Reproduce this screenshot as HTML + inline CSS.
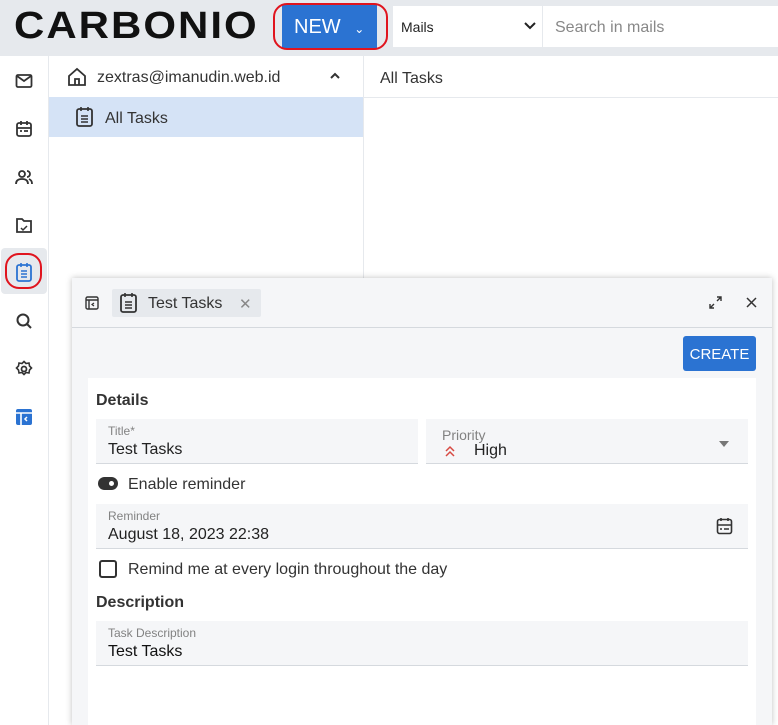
<!DOCTYPE html>
<html><head><meta charset="utf-8"><style>
*{box-sizing:border-box;margin:0;padding:0}
body{width:778px;height:725px;overflow:hidden;background:#fff;font-family:"Liberation Sans",Roboto,sans-serif;color:#333;position:relative}
.a{position:absolute}
svg{display:block}
.t{margin-top:2px}
.field{position:absolute;background:#f5f6f8;border-bottom:1px solid #d5d9de}
.lbl{position:absolute;font-size:12px;color:#828282}
.val{position:absolute;font-size:16px;color:#222;margin-top:1px}
</style></head><body>
<div class="a" style="left:0;top:0;width:778px;height:56px;background:#e6e9ed"></div>
<div class="a" style="left:14px;top:4px;font-size:42px;font-weight:bold;letter-spacing:2px;color:#111;transform:scaleY(0.9);transform-origin:top left">CARBONIO</div>
<div class="a" style="left:282px;top:5px;width:95px;height:43px;background:#2b73d2;color:#fff;font-size:20px;line-height:45px;padding-left:12px">NEW <span style="font-size:12px;margin-left:8px">⌄</span></div>
<div class="a" style="left:273px;top:3px;width:115px;height:47px;border:2px solid #e0141e;border-radius:14px"></div>
<div class="a" style="left:393px;top:6px;width:149px;height:41px;background:#fff;font-size:14px;line-height:42px;padding-left:8px;color:#222">Mails
<svg class="a" style="left:131px;top:15px" width="12" height="10"><path d="M1 2l5 5 5-5" stroke="#222" stroke-width="2" fill="none"/></svg></div>
<div class="a" style="left:543px;top:6px;width:235px;height:41px;background:#fff;font-size:16px;line-height:43px;padding-left:12px;color:#888">Search in mails</div>
<div class="a" style="left:48px;top:56px;width:1px;height:669px;background:#e6e9ed"></div>
<svg class="a" style="left:15px;top:73px" width="18" height="16"><rect x="1.5" y="2" width="15" height="12" rx="1.5" stroke="#333" stroke-width="1.8" fill="none"/><path d="M2 3l7 5 7-5" stroke="#333" stroke-width="1.8" fill="none"/></svg>
<svg class="a" style="left:15px;top:120px" width="18" height="18"><rect x="2" y="3" width="14" height="13" rx="2" stroke="#333" stroke-width="1.8" fill="none"/><path d="M6 1v4M12 1v4M2 8h14M5 11h2M9 11h4" stroke="#333" stroke-width="1.8"/></svg>
<svg class="a" style="left:15px;top:168px" width="18" height="18"><circle cx="7" cy="6" r="3" stroke="#333" stroke-width="1.8" fill="none"/><path d="M1 16c0-4 3-5 6-5s6 1 6 5M12 3a3 3 0 010 6M14 11c2 1 3 2 3 5" stroke="#333" stroke-width="1.8" fill="none"/></svg>
<svg class="a" style="left:15px;top:216px" width="18" height="18"><path d="M2 3h5l2 2h7v11H2z" stroke="#333" stroke-width="1.8" fill="none"/><path d="M6 12l2 2 4-4" stroke="#333" stroke-width="1.5" fill="none"/></svg>
<div class="a" style="left:1px;top:248px;width:46px;height:46px;background:#e6e9ed;border-radius:4px"></div>
<div class="a" style="left:5px;top:253px;width:37px;height:36px;border:2px solid #e0141e;border-radius:14px"></div>
<svg class="a" style="left:15px;top:262px" width="18" height="20"><rect x="2" y="3" width="14" height="16" rx="2" stroke="#2b73d2" stroke-width="1.8" fill="none"/><path d="M6 1v4M12 1v4M6 9h6M6 12h6M6 15h6" stroke="#2b73d2" stroke-width="1.6"/></svg>
<svg class="a" style="left:15px;top:312px" width="18" height="18"><circle cx="8" cy="8" r="5.5" stroke="#333" stroke-width="2" fill="none"/><path d="M12 12l4 4" stroke="#333" stroke-width="2"/></svg>
<svg class="a" style="left:15px;top:360px" width="18" height="18"><circle cx="9" cy="9" r="2.5" stroke="#333" stroke-width="1.8" fill="none"/><path d="M9 1.5l2 2 3-.5.5 3 2 2-2 2-.5 3-3-.5-2 2-2-2-3 .5-.5-3-2-2 2-2 .5-3 3 .5z" stroke="#333" stroke-width="1.6" fill="none"/></svg>
<svg class="a" style="left:15px;top:408px" width="18" height="18"><rect x="1" y="1" width="16" height="16" rx="2" fill="#2b73d2"/><path d="M1 5h16M6 5v12" stroke="#fff" stroke-width="1.6"/><path d="M12 9l-2 2 2 2" stroke="#fff" stroke-width="1.5" fill="none"/></svg>
<div class="a" style="left:363px;top:56px;width:1px;height:669px;background:#e6e9ed"></div>
<svg class="a" style="left:67px;top:67px" width="20" height="20"><path d="M2 9L10 2l8 7v9H2z" stroke="#333" stroke-width="1.8" fill="none"/><path d="M8 18v-6h4v6" stroke="#333" stroke-width="1.8" fill="none"/></svg>
<div class="a t" style="left:97px;top:67px;font-size:16px;color:#333">zextras@imanudin.web.id</div>
<svg class="a" style="left:329px;top:72px" width="12" height="8"><path d="M2 6l4-4 4 4" stroke="#333" stroke-width="2" fill="none"/></svg>
<div class="a" style="left:49px;top:97px;width:314px;height:40px;background:#d5e3f6"></div>
<svg class="a" style="left:75px;top:106px" width="20" height="22"><rect x="2" y="3" width="15" height="17" rx="2" stroke="#333" stroke-width="1.8" fill="none"/><path d="M6 1v4M13 1v4M6 10h7M6 13h7M6 16h7" stroke="#333" stroke-width="1.6"/></svg>
<div class="a t" style="left:105px;top:108px;font-size:16px;color:#333">All Tasks</div>
<div class="a" style="left:364px;top:97px;width:414px;height:1px;background:#e6e9ed"></div>
<div class="a t" style="left:380px;top:68px;font-size:16px;color:#333">All Tasks</div>
<div class="a" style="left:72px;top:278px;width:700px;height:447px;background:#f5f6f8;box-shadow:0 0 6px rgba(0,0,0,.25)"></div>
<div class="a" style="left:72px;top:327px;width:700px;height:1px;background:#d5d9de"></div>
<svg class="a" style="left:85px;top:296px" width="14" height="14"><rect x="1" y="1" width="12" height="12" rx="1.5" stroke="#333" stroke-width="1.4" fill="none"/><path d="M1 4h12M4 4v9" stroke="#333" stroke-width="1.4"/><path d="M9 7l-2 1.5 2 1.5" stroke="#333" stroke-width="1.2" fill="none"/></svg>
<div class="a" style="left:112px;top:289px;width:149px;height:28px;background:#e6e9ed;border-radius:2px"></div>
<svg class="a" style="left:119px;top:292px" width="20" height="22"><rect x="2" y="3" width="15" height="17" rx="2" stroke="#333" stroke-width="1.8" fill="none"/><path d="M6 1v4M13 1v4M6 10h7M6 13h7M6 16h7" stroke="#333" stroke-width="1.6"/></svg>
<div class="a t" style="left:148px;top:293px;font-size:16px;color:#333">Test Tasks</div>
<div class="a t" style="left:239px;top:293px;font-size:15px;color:#888">✕</div>
<svg class="a" style="left:709px;top:296px" width="13" height="13"><path d="M8 1h4v4M12 1L8 5M5 12H1V8M1 12l4-4" stroke="#333" stroke-width="1.4" fill="none"/></svg>
<svg class="a" style="left:746px;top:297px" width="11" height="11"><path d="M1 1l9 9M10 1l-9 9" stroke="#333" stroke-width="1.5"/></svg>
<div class="a" style="left:683px;top:336px;width:73px;height:35px;background:#2b73d2;border-radius:3px;color:#fff;font-size:15px;line-height:37px;text-align:center">CREATE</div>
<div class="a" style="left:88px;top:378px;width:668px;height:347px;background:#fff"></div>
<div class="a t" style="left:96px;top:390px;font-size:16px;font-weight:bold;color:#333">Details</div>
<div class="field" style="left:96px;top:419px;width:322px;height:45px"></div>
<div class="lbl" style="left:108px;top:424px">Title*</div>
<div class="val" style="left:108px;top:440px">Test Tasks</div>
<div class="field" style="left:426px;top:419px;width:322px;height:45px"></div>
<div class="lbl" style="left:442px;top:427px;font-size:14px">Priority</div>
<svg class="a" style="left:444px;top:445px" width="12" height="12"><path d="M2 6l4-4 4 4M2 11l4-4 4 4" stroke="#d74942" stroke-width="1.5" fill="none"/></svg>
<div class="val" style="left:474px;top:441px">High</div>
<svg class="a" style="left:719px;top:441px" width="10" height="6"><path d="M0 0h10L5 6z" fill="#777"/></svg>
<div class="a" style="left:98px;top:477px;width:20px;height:13px;background:#333;border-radius:7px"></div>
<div class="a" style="left:109px;top:481px;width:5px;height:5px;background:#fff;border-radius:50%"></div>
<div class="a t" style="left:128px;top:474px;font-size:16px;color:#333">Enable reminder</div>
<div class="field" style="left:96px;top:504px;width:652px;height:45px"></div>
<div class="lbl" style="left:108px;top:509px">Reminder</div>
<div class="val" style="left:108px;top:525px">August 18, 2023 22:38</div>
<svg class="a" style="left:716px;top:517px" width="17" height="18"><rect x="1.5" y="2.5" width="14" height="14" rx="2" stroke="#333" stroke-width="1.6" fill="none"/><path d="M5 1v3M12 1v3M1.5 8h14M4 12h2M8 12h5" stroke="#333" stroke-width="1.6"/></svg>
<div class="a" style="left:99px;top:560px;width:18px;height:18px;border:2px solid #333;border-radius:3px"></div>
<div class="a t" style="left:128px;top:559px;font-size:16px;color:#333">Remind me at every login throughout the day</div>
<div class="a t" style="left:96px;top:592px;font-size:16px;font-weight:bold;color:#333">Description</div>
<div class="field" style="left:96px;top:621px;width:652px;height:45px"></div>
<div class="lbl" style="left:108px;top:626px">Task Description</div>
<div class="val" style="left:108px;top:642px;color:#111">Test Tasks</div>
</body></html>
